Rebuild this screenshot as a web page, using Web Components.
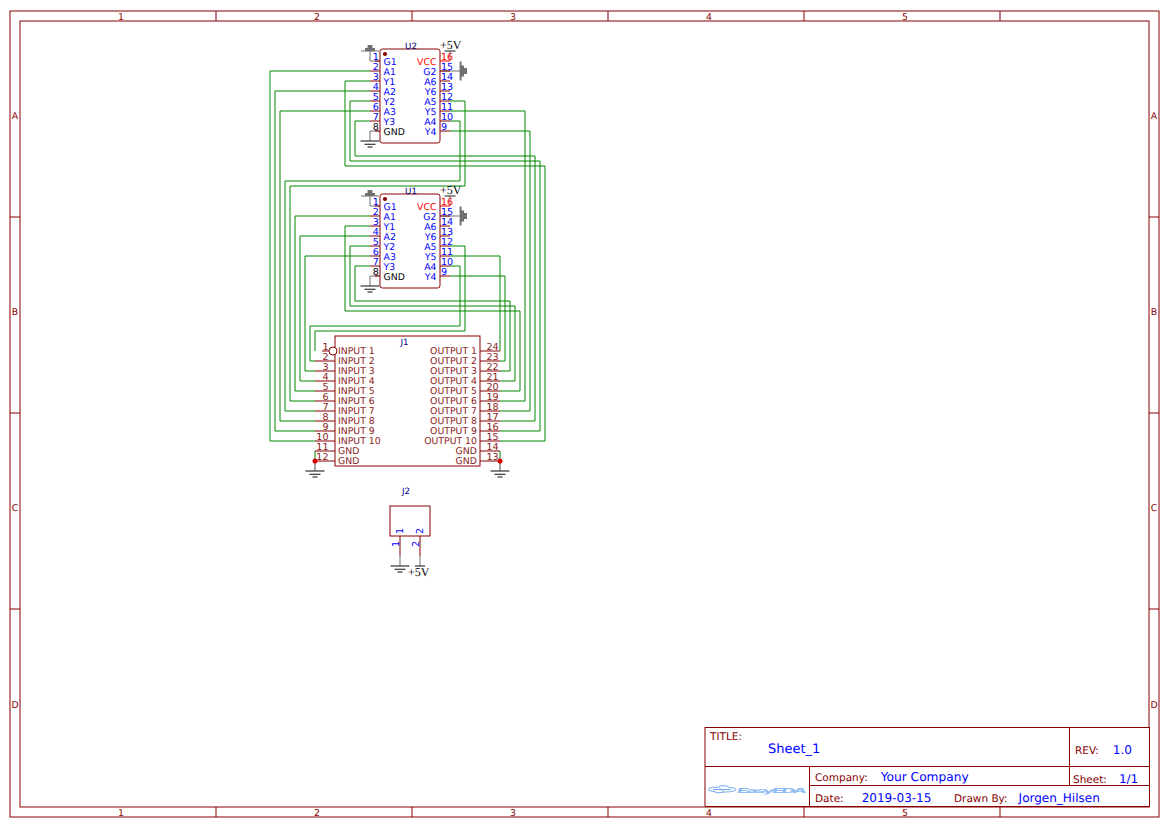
<!DOCTYPE html>
<html lang="en"><head><meta charset="utf-8"><title>Sheet_1</title>
<style>
html,body{margin:0;padding:0;background:#fff}
body{font-family:"DejaVu Sans",sans-serif}
</style></head><body>
<schematic-sheet>
  <sheet-frame></sheet-frame>
  <sch-wires></sch-wires>
  <sch-ic ref="U2" x="360" y="40"></sch-ic>
  <sch-ic ref="U1" x="360" y="185"></sch-ic>
  <sch-relay></sch-relay>
  <sch-header></sch-header>
  <title-block>
    <tb-cell slot="title" label="TITLE:" value="Sheet_1" kind="title"></tb-cell>
    <tb-cell slot="rev" label="REV:" value="1.0" kind="rev"></tb-cell>
    <easyeda-logo slot="logo"></easyeda-logo>
    <tb-cell slot="company" label="Company:" value="Your Company" kind="company"></tb-cell>
    <tb-cell slot="sheet" label="Sheet:" value="1/1" kind="sheet"></tb-cell>
    <tb-cell slot="date" label="Date:" value="2019-03-15" kind="date"></tb-cell>
    <tb-cell slot="drawn" label="Drawn By:" value="Jorgen_Hilsen" kind="drawn"></tb-cell>
  </title-block>
</schematic-sheet>
<script>
const DARK='#880000',GREEN='#008800',BLUE='#0000ff',NAVY='#000080',GREY='#707070',INK='#333333';
const line=(x1,y1,x2,y2,c,w=1)=>`<line x1="${x1}" y1="${y1}" x2="${x2}" y2="${y2}" stroke="${c}" stroke-width="${w}"/>`;
const poly=(pts,c)=>`<polyline points="${pts}" fill="none" stroke="${c}" stroke-width="1"/>`;
const text=(x,y,t,c,size=9.33,anchor='start',extra='')=>`<text x="${x}" y="${y}" fill="${c}" font-size="${size}" text-anchor="${anchor}" ${extra}>${t}</text>`;
const gndDown=(x,y,c)=>line(x-9.5,y,x+9.5,y,c,1.2)+line(x-5.5,y+3.3,x+5.5,y+3.3,c,1.2)+line(x-2.5,y+6,x+2.5,y+6,c,1.2);
class SvgPart extends HTMLElement{
  connectedCallback(){
    if(this.shadowRoot)return;
    const s=this.attachShadow({mode:'open'});
    const x=+(this.getAttribute('x')||0),y=+(this.getAttribute('y')||0);
    s.innerHTML=`<style>:host{display:block;position:absolute;left:${x}px;top:${y}px;width:1px;height:1px}
    svg{display:block;overflow:visible;position:absolute;left:0;top:0;font-family:"DejaVu Sans",sans-serif;text-rendering:geometricPrecision}</style>
    <svg width="1" height="1">${this.draw()}</svg>`;
  }
  draw(){return ''}
}
customElements.define('schematic-sheet',class extends HTMLElement{
  connectedCallback(){
    this.attachShadow({mode:'open'}).innerHTML=`<style>:host{display:block;position:relative;width:1169px;height:828px;overflow:hidden;background:#fff}</style><slot></slot>`;
  }
});
customElements.define('sheet-frame',class extends SvgPart{
  draw(){
    let o=`<rect x="10" y="11" width="1149" height="806" fill="none" stroke="${DARK}"/><rect x="20" y="21" width="1129" height="786" fill="none" stroke="${DARK}"/>`;
    [216,412,608,804,1000].forEach(x=>{o+=line(x,11,x,21,DARK)+line(x,807,x,817,DARK)});
    [217,413,609].forEach(y=>{o+=line(10,y,20,y,DARK)+line(1149,y,1159,y,DARK)});
    [[121,1],[317,2],[513,3],[709,4],[905,5]].forEach(([x,n])=>{o+=text(x,19.5,n,DARK,9.33,'middle')+text(x,815.5,n,DARK,9.33,'middle')});
    [[119,'A'],[315,'B'],[511,'C'],[707.6,'D']].forEach(([y,n])=>{o+=text(15,y,n,DARK,9.33,'middle')+text(1154,y,n,DARK,9.33,'middle')});
    return o;
  }
});
customElements.define('sch-wires',class extends SvgPart{
  draw(){
    const w=[
      '370,71 270,71 270,441 315,441','370,91 275,91 275,431 315,431','370,111 280,111 280,421 315,421',
      '370,81 345,81 345,166 545,166 545,441 500,441','370,101 350,101 350,161 540,161 540,431 500,431','370,121 355,121 355,156 535,156 535,421 500,421',
      '450,101 465,101 465,186 290,186 290,401 315,401','450,121 460,121 460,181 285,181 285,411 315,411',
      '450,111 525,111 525,401 500,401','450,131 530,131 530,411 500,411',
      '370,216 295,216 295,391 315,391','370,236 300,236 300,381 315,381','370,256 305,256 305,371 315,371',
      '370,226 345,226 345,311 520,311 520,391 500,391','370,246 350,246 350,306 515,306 515,381 500,381','370,266 355,266 355,301 510,301 510,371 500,371',
      '450,246 465,246 465,331 315,331 315,351','450,266 460,266 460,326 310,326 310,361 315,361',
      '450,256 500,256 500,351','450,276 505,276 505,361 500,361',
      '315,451 315,461','500,451 500,461'
    ];
    return w.map(p=>poly(p,GREEN)).join('');
  }
});
customElements.define('sch-ic',class extends SvgPart{
  draw(){
    const L=[[1,'G1'],[2,'A1'],[3,'Y1'],[4,'A2'],[5,'Y2'],[6,'A3'],[7,'Y3'],[8,'GND']];
    const R=[[16,'VCC'],[15,'G2'],[14,'A6'],[13,'Y6'],[12,'A5'],[11,'Y5'],[10,'A4'],[9,'Y4']];
    let o=`<rect x="20" y="9" width="60" height="94" rx="2.5" fill="#fff" stroke="${DARK}"/>`;
    o+=poly('20,21 10,21 10,11',GREY);
    o+=`<path d="M1 11.6V10.4H5V8H7.6V5H12.4V8H15V10.4H19V11.6Z" fill="${GREY}"/>`;
    o+=poly('20,91 10,91 10,101',GREY)+gndDown(10,101,INK);
    o+=line(80,31,100,31,GREY,1);
    o+=`<path d="M99.6 21.5H101.6V25.5H104V28H107V34H104V36.5H101.6V40.5H99.6Z" fill="${GREY}"/>`;
    o+=line(90,21,90,11,GREY,1)+line(84.5,11,95.5,11,INK,1.1);
    o+=text(80,9,'+5V','#000',12,'start','font-family="Liberation Serif"');
    L.forEach(([n,t],i)=>{const y=21+i*10;
      o+=line((n===1||n===8)?15:10,y,20,y,DARK);
      const c=n===8?'#000':BLUE;
      o+=text(18.8,y-.6,n,c,9.6,'end')+text(23.5,y+3.6,t,c);
    });
    R.forEach(([n,t],i)=>{const y=21+i*10;
      o+=line(80,y,90,y,n===16?'#ff0000':DARK);
      const c=n===16?'#ff0000':BLUE;
      o+=text(81,y-.6,n,c,9.6)+text(76.5,y+3.6,t,c,9.33,'end');
    });
    o+=`<circle cx="25" cy="14" r="2.1" fill="${DARK}"/>`;
    o+=text(51,9,this.getAttribute('ref'),NAVY,8.7,'middle');
    return o;
  }
});
customElements.define('sch-relay',class extends SvgPart{
  draw(){
    let o=`<rect x="335" y="336" width="145" height="130" fill="#fff" stroke="${DARK}"/>`;
    const C='#8b1a1a';
    for(let i=0;i<12;i++){
      const y=351+i*10,n=i+1;
      o+=line(n===1?322:315,y,335,y,DARK)+line(480,y,500,y,DARK);
      o+=text(328.5,y-.6,n,C,9.6,'end')+text(486.5,y-.6,25-n,C,9.6);
      o+=text(338,y+3.2,i<10?'INPUT '+n:'GND',C)+text(477,y+3.2,i<10?'OUTPUT '+n:'GND',C,9.33,'end');
    }
    o+=`<circle cx="333" cy="351" r="4" fill="#fff" stroke="${DARK}"/>`;
    o+=text(404.5,345,'J1',NAVY,8.7,'middle');
    [315,500].forEach(x=>{
      o+=line(x,461,x,471,GREY,1.3)+gndDown(x,471,INK)+`<circle cx="${x}" cy="461" r="2.5" fill="#dd0000"/>`;
    });
    return o;
  }
});
customElements.define('sch-header',class extends SvgPart{
  draw(){
    let o=`<rect x="390" y="506" width="40" height="30" fill="#fff" stroke="${DARK}"/>`;
    o+=line(400,536,400,556,DARK)+line(420,536,420,556,DARK);
    o+=line(400,556,400,566,GREY)+line(420,556,420,566,GREY);
    o+=gndDown(400,566,INK)+line(415,566,425,566,INK,1.2);
    o+=text(408,576,'+5V','#000',12,'start','font-family="Liberation Serif"');
    o+=text(406,494,'J2',NAVY,8.7,'middle');
    const rot=(x,y,t)=>text(0,0,t,BLUE,9.6,'middle',`transform="translate(${x} ${y}) rotate(-90)"`);
    o+=rot(402.8,531,1)+rot(422.8,531,2)+rot(398.8,544,1)+rot(418.8,544,2);
    return o;
  }
});
customElements.define('title-block',class extends HTMLElement{
  connectedCallback(){
    this.attachShadow({mode:'open'}).innerHTML=`<style>
    :host{position:absolute;left:705px;top:727px;width:445px;height:80px;box-sizing:border-box;display:grid;
      grid-template-columns:105px 260px 79px;grid-template-rows:39px 19px 20px;
      border:1px solid ${DARK};border-left:0;box-shadow:inset 1px 0 #c37f7f,-1px 0 #c37f7f;background:#fff;font-family:"DejaVu Sans",sans-serif;text-rendering:geometricPrecision}
    .c{border-right:1px solid ${DARK};border-bottom:1px solid ${DARK};min-width:0}
    .title{grid-column:1/3;grid-row:1}.rev{grid-column:3;grid-row:1;border-right:0}
    .logo{grid-column:1;grid-row:2/4;border-bottom:0}
    .company{grid-column:2;grid-row:2}.sheet{grid-column:3;grid-row:2;border-right:0}
    .date{grid-column:2/4;grid-row:3;border:0;display:flex}
    </style>
    <div class="c title"><slot name="title"></slot></div><div class="c rev"><slot name="rev"></slot></div>
    <div class="c logo"><slot name="logo"></slot></div>
    <div class="c company"><slot name="company"></slot></div><div class="c sheet"><slot name="sheet"></slot></div>
    <div class="c date"><slot name="date"></slot><slot name="drawn"></slot></div>`;
  }
});
customElements.define('tb-cell',class extends HTMLElement{
  connectedCallback(){
    const k=this.getAttribute('kind');
    const cfg={title:'flex-direction:column;padding:3px 0 0 5px;',rev:'align-items:baseline;padding:16px 0 0 5px;gap:14px;',
      company:'align-items:baseline;padding:3px 0 0 5px;gap:13px;',sheet:'align-items:baseline;padding:6px 0 0 3px;gap:12px;',
      date:'align-items:baseline;padding:6px 0 0 5px;gap:18px;width:139px;box-sizing:border-box;',drawn:'align-items:baseline;padding:6px 0 0 5px;gap:11px;'}[k];
    const vs={title:'font-size:13px;margin:0 0 0 58px;',rev:'font-size:12px;',company:'font-size:12.2px;',sheet:'font-size:12px;',date:'font-size:12px;',drawn:'font-size:12px;'}[k];
    this.attachShadow({mode:'open'}).innerHTML=`<style>:host{display:flex;${cfg}color:${DARK};line-height:1.15}
      .l{font-size:10.5px}.v{color:${BLUE};${vs}}</style>
      <span class="l">${this.getAttribute('label')}</span><span class="v">${this.getAttribute('value')}</span>`;
  }
});
customElements.define('easyeda-logo',class extends HTMLElement{
  connectedCallback(){
    this.attachShadow({mode:'open'}).innerHTML=`<style>:host{display:block;height:100%}svg{display:block}</style>
    <svg width="104" height="40" viewBox="0 0 104 40">
      <g fill="none" stroke="#6fa8f0" stroke-width="1">
        <path d="M3 22.5C5 20 10 20 12 20.5C15 18 22 18 24 20.5C28 20.5 31 21.5 31 22.5C29 25 22 25 19 25C16 26 11 26 9 24.5C6 24.5 4 23.5 3 22.5Z"/>
        <path d="M8 22.5H26M14 20.5L19 25"/>
      </g>
      <text x="0" y="0" transform="translate(31 25.6) skewX(-14) scale(1.9 .72)" font-family="DejaVu Sans" font-size="9.5" font-weight="700" fill="#8fbcf5" textLength="37" lengthAdjust="spacing">EasyEDA</text>
    </svg>`;
  }
});
</script>
</body></html>
